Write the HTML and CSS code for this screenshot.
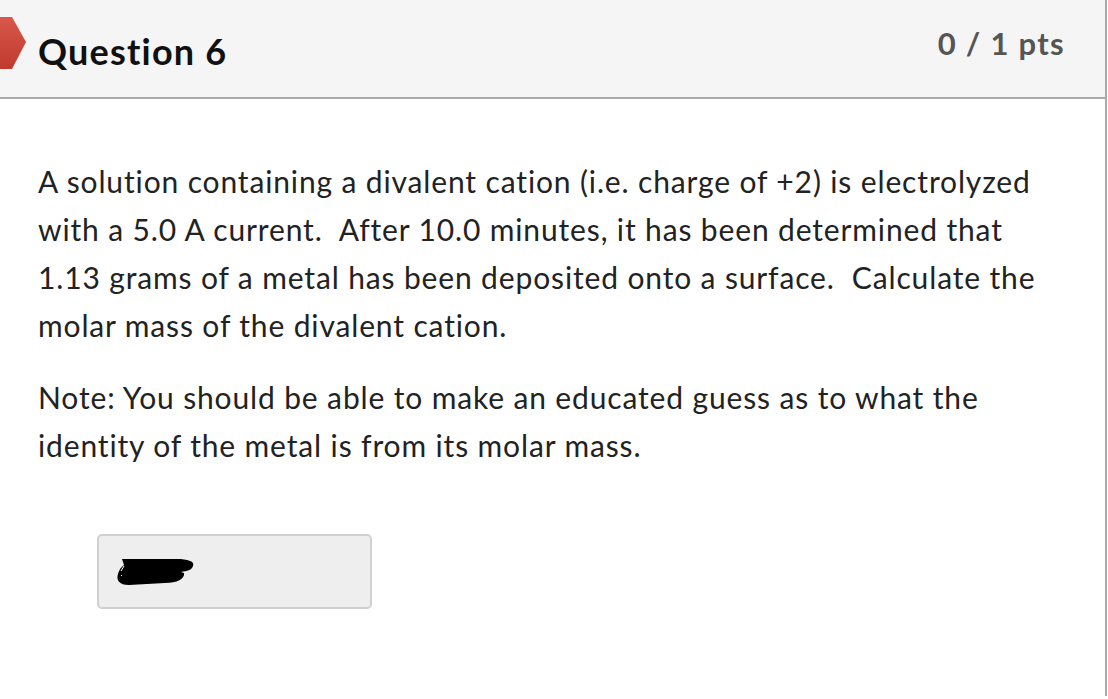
FILE: index.html
```html
<!DOCTYPE html>
<html>
<head>
<meta charset="utf-8">
<link rel="stylesheet" href="styles.css">
</head>
<body>
<div class="question">
  <div class="header">
    <svg class="flag" width="28" height="56" viewBox="0 0 28 56">
      <defs>
        <linearGradient id="fg" x1="0" y1="0" x2="0" y2="1">
          <stop offset="0" stop-color="#d9574b"/>
          <stop offset="1" stop-color="#bf3a2f"/>
        </linearGradient>
      </defs>
      <polygon points="0,1 12,1 26,26 12,53 0,53" fill="url(#fg)"/>
    </svg>
    <h2 class="title">Question 6</h2>
    <div class="pts">0 / 1 pts</div>
  </div>
  <div class="body">
    <p>A solution containing a divalent cation (i.e. charge of +2) is electrolyzed with a 5.0 A current.&nbsp; After 10.0 minutes, it has been determined that 1.13 grams of a metal has been deposited onto a surface.&nbsp; Calculate the molar mass of the divalent cation.</p>
    <p>Note: You should be able to make an educated guess as to what the identity of the metal is from its molar mass.</p>
    <div class="answer">
      <svg class="scribble" width="80" height="30" viewBox="0 0 80 30">
        <path d="M7,2 L62,2 C72,2 80,4 78,9 C77,13 72,14 66,15 L69,16 C70,22 62,26 50,26 L14,28 C4,28 1,23 3,17 C4,13 6,10 9,8 L7,2 Z" fill="#000"/>
        <path d="M9,9 L6,14 M6,18 L7,19" stroke="#fff" stroke-width="1" fill="none"/>
      </svg>
    </div>
  </div>
</div>
</body>
</html>
```
FILE: styles.css
```css
html, body {
  margin: 0;
  padding: 0;
  background: #fff;
}
body {
  font-family: Lato, "Open Sans", sans-serif;
  color: #222;
}
.question {
  width: 1105px;
  height: 696px;
  border-right: 2px solid #aaa;
  display: flex;
  flex-direction: column;
}
.header {
  height: 97px;
  background: #f5f5f5;
  border-bottom: 2px solid #aaa;
  display: flex;
  align-items: flex-start;
  position: relative;
}
.flag {
  position: absolute;
  left: 0;
  top: 16px;
}
.title {
  margin: 0;
  padding: 30px 0 0 38px;
  font-size: 36px;
  font-weight: 700;
  line-height: 42px;
  letter-spacing: 1.2px;
  color: #111;
  flex: 1;
}
.pts {
  padding: 22px 40px 0 0;
  font-size: 31px;
  font-weight: 700;
  line-height: 42px;
  letter-spacing: 1.3px;
  color: #555;
}
.body {
  padding: 58px 37px 0 38px;
}
.body p {
  margin: 0 0 24px 0;
  font-size: 30px;
  line-height: 48px;
  letter-spacing: 0.86px;
}
.answer {
  margin: 65px 0 0 59px;
  width: 255px;
  height: 71px;
  background: #eee;
  border: 2px solid #d0d0d0;
  border-radius: 5px;
  display: flex;
  align-items: center;
  padding-left: 16px;
}
.scribble {
  display: block;
}
```
